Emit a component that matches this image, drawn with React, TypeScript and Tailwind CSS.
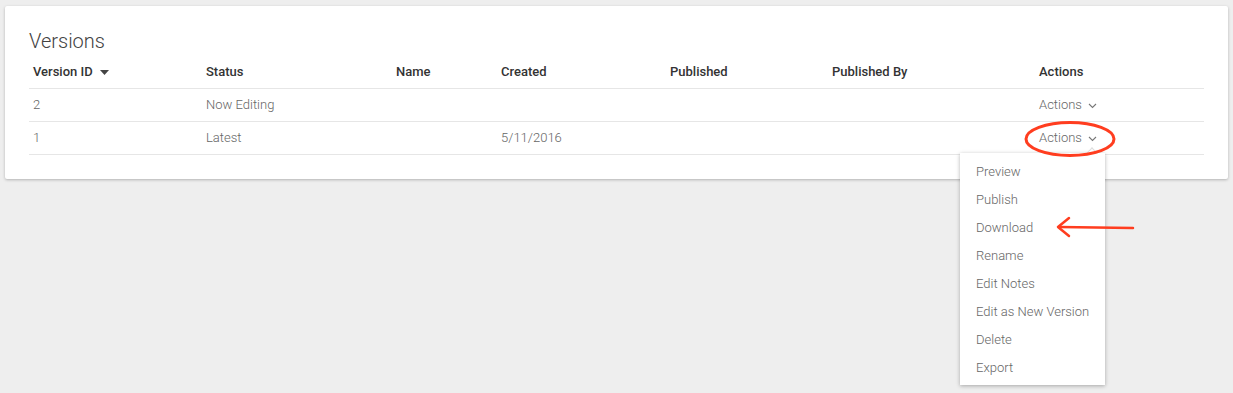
import React from "react";

const cols = [
  { label: "Version ID", w: "w-[173px]" },
  { label: "Status", w: "w-[190px]" },
  { label: "Name", w: "w-[105px]" },
  { label: "Created", w: "w-[169px]" },
  { label: "Published", w: "w-[162px]" },
  { label: "Published By", w: "w-[207px]" },
  { label: "Actions", w: "w-[169px]" },
];

const rows = [
  ["2", "Now Editing", "", "", "", ""],
  ["1", "Latest", "", "5/11/2016", "", ""],
];

const menu = [
  "Preview",
  "Publish",
  "Download",
  "Rename",
  "Edit Notes",
  "Edit as New Version",
  "Delete",
  "Export",
];

function Chevron() {
  return (
    <svg width="9" height="6" viewBox="0 0 9 6" className="ml-[6px] mt-[2px]">
      <path d="M1 1 L4.5 4.5 L8 1" fill="none" stroke="#777" strokeWidth="1.1" />
    </svg>
  );
}

export default function App() {
  return (
    <div
      className="relative w-[1233px] h-[393px] bg-[#eeeeee] pt-[6px] pl-[5px] overflow-hidden"
      style={{ fontFamily: "Roboto, 'Noto Sans', sans-serif" }}
    >
      <div className="w-[1223px] h-[173px] bg-white rounded-[2px] shadow-[0_1px_3px_rgba(0,0,0,0.25)] pl-[24px] pt-[23px]">
        <h2 className="text-[20px] leading-[24px] text-[#424242] font-light">Versions</h2>
        <div className="mt-[3px] w-[1175px]">
          <div className="flex h-[33px] items-center border-b border-[#e6e6e6]">
            {cols.map((c, i) => (
              <div key={i} className={`${c.w} pl-[4px] text-[13px] font-medium text-[#333333] flex items-center`}>
                {c.label}
                {i === 0 && (
                  <svg width="9" height="5" viewBox="0 0 9 5" className="ml-[7px]">
                    <path d="M0 0 L9 0 L4.5 5 Z" fill="#444" />
                  </svg>
                )}
              </div>
            ))}
          </div>
          {rows.map((r, ri) => (
            <div key={ri} className="flex h-[33px] items-center border-b border-[#e6e6e6]">
              {r.map((v, ci) => (
                <div key={ci} className={`${cols[ci].w} pl-[4px] text-[13px] font-light text-[#666666]`}>
                  {v}
                </div>
              ))}
              <div className={`${cols[6].w} pl-[4px] text-[13px] font-light text-[#666666] flex items-center`}>
                Actions
                <Chevron />
              </div>
            </div>
          ))}
        </div>
      </div>

      {/* Dropdown menu */}
      <div className="absolute left-[960px] top-[153px] w-[145px] h-[232px] bg-white shadow-[0_1px_4px_rgba(0,0,0,0.3)] pt-[5px] pb-[3px]">
        <div className="absolute -top-[4px] left-[128px] w-[8px] h-[8px] bg-white rotate-45 border-l border-t border-[#dcdcdc]" />
        {menu.map((m) => (
          <div key={m} className="relative h-[28px] flex items-center pl-[16px] text-[13px] font-light text-[#666666]">
            {m}
          </div>
        ))}
      </div>

      {/* Annotations */}
      <svg className="absolute left-0 top-0 pointer-events-none" width="1233" height="393">
        <ellipse cx="1070" cy="139" rx="44" ry="16.5" fill="none" stroke="#ff3d1f" strokeWidth="3" />
        <path d="M1059 227 L1133 228" stroke="#ff3d1f" strokeWidth="2.5" fill="none" strokeLinecap="round" />
        <path d="M1069 218 L1058 227 L1069 236" stroke="#ff3d1f" strokeWidth="2.5" fill="none" strokeLinecap="round" strokeLinejoin="round" />
      </svg>
    </div>
  );
}
